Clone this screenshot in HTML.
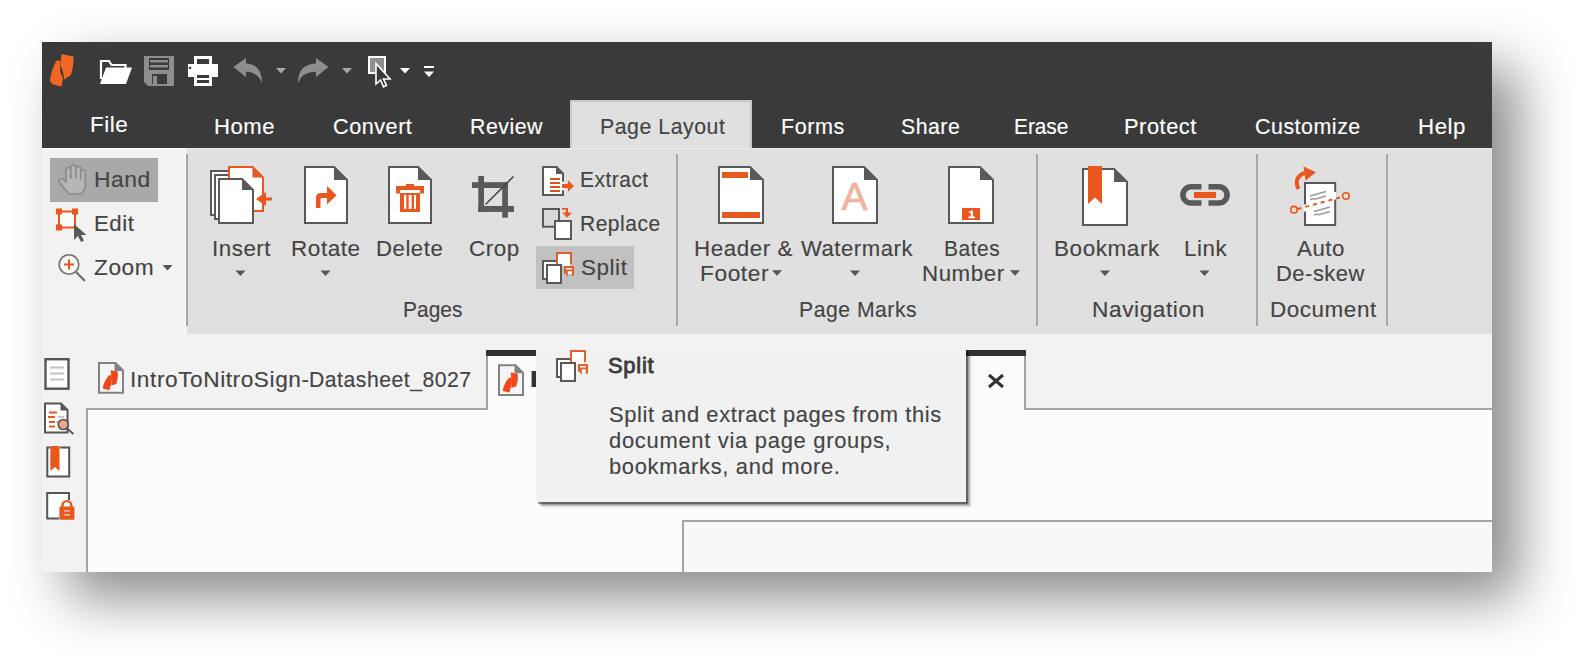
<!DOCTYPE html>
<html><head><meta charset="utf-8"><title>Split</title>
<style>
html,body{margin:0;padding:0;background:#fff;}
body{width:1576px;height:656px;position:relative;overflow:hidden;font-family:"Liberation Sans",sans-serif;}
#win{position:absolute;left:42px;top:42px;width:1450px;height:530px;background:#f2f2f2;box-shadow:26px 26px 52px rgba(0,0,0,.46);}
.abs{position:absolute;}
.t{position:absolute;white-space:pre;font-size:22.5px;line-height:26px;transform-origin:0 0;-webkit-text-stroke:.15px currentColor;}
.t.w{color:#fff;}
.t.k{color:#444;}
.t.b{-webkit-text-stroke:.85px currentColor;color:#3c3c3c}
svg{position:absolute;overflow:visible;}
.sep{top:154px;width:2px;height:172px;background:#a8a8a8;}
</style></head><body>
<div id="win"></div>
<!-- dark title + tab bar -->
<div class="abs" style="left:42px;top:42px;width:1450px;height:106px;background:#3a3a3a"></div>
<!-- ribbon body -->
<div class="abs" style="left:187px;top:148px;width:1305px;height:185.500px;background:#e0e0e0;border-top:1px solid #ebebeb;box-sizing:border-box"></div>
<!-- active tab -->
<div class="abs" style="left:570px;top:100px;width:178px;height:46px;background:#e0e0e0;border:2px solid #c9c9c9;border-bottom:none"></div>
<!-- separators -->
<div class="abs sep" style="left:186px"></div>
<div class="abs sep" style="left:676px"></div>
<div class="abs sep" style="left:1036px"></div>
<div class="abs sep" style="left:1256px"></div>
<div class="abs sep" style="left:1386px"></div>
<div class="abs" style="left:185px;top:149px;width:1px;height:184px;background:#fafafa"></div>
<div class="abs" style="left:42px;top:148px;width:144px;height:1px;background:#fdfdfd"></div>
<!-- hand bg / split bg -->
<div class="abs" style="left:50px;top:158px;width:108px;height:43.500px;background:#a9a9a9"></div>
<div class="abs" style="left:536px;top:246px;width:98px;height:43px;background:#c1c1c1"></div>
<!-- doc area -->
<div class="abs" style="left:86px;top:408px;width:1406px;height:164px;background:#fcfcfc;border-left:2px solid #a4a4a4;border-top:2px solid #a4a4a4;box-sizing:border-box"></div>
<!-- active doc tab -->
<div class="abs" style="left:486px;top:352px;width:540px;height:58px;background:#fcfcfc;border-left:2px solid #a4a4a4;border-right:2px solid #a4a4a4;box-sizing:border-box"></div>
<div class="abs" style="left:486px;top:350px;width:540px;height:5.700px;background:#333"></div>
<!-- inner page -->
<div class="abs" style="left:682px;top:520px;width:810px;height:52px;background:#f8f8fa;border-left:2px solid #a4a4a4;border-top:2px solid #a4a4a4;box-sizing:border-box"></div>
<!-- tooltip -->
<div class="abs" style="left:536px;top:348px;width:429.800px;height:153.900px;background:#f1f1f1;box-shadow:2.200px 2.200px 0 rgba(0,0,0,.44),3.800px 3.800px 1px rgba(0,0,0,.2),5px 5px 3px rgba(0,0,0,.12)"></div>
<svg width="1576" height="656" viewBox="0 0 1576 656" style="left:0;top:0">
<defs>
<g id="pg44"><path d="M1 1H30L43 14V57H1Z" fill="#fff" stroke="#595959" stroke-width="2"/><path d="M30 0V14H44Z" fill="#595959"/></g>
<g id="pg46"><path d="M1 1H32L45 14V57H1Z" fill="#fff" stroke="#595959" stroke-width="2"/><path d="M32 0V14H46Z" fill="#595959"/></g>
<path id="dd" d="M0 0H10L5 5.5Z"/>
<g id="spl">
<rect x="1" y="9" width="14" height="18" fill="#fff" stroke="#595959" stroke-width="2"/>
<path d="M15 13V1H29V12.300" fill="#fff" stroke="#e0602d" stroke-width="2"/>
<rect x="16" y="2" width="12" height="12" fill="#fff"/>
<rect x="5" y="13" width="14" height="18" fill="#fff" stroke="#595959" stroke-width="2"/>
<rect x="22" y="14" width="10" height="8" fill="#fff"/>
<path d="M22 14H32V23.700H29.800V19.300H25.800V23.700H24V21.700H22Z M24 16V17.600H29.800V16Z" fill="#e0602d" fill-rule="evenodd"/>
</g>
</defs>
<!-- logo -->
<g fill="#f26522">
<path d="M56.5 60.5 Q59 60 60.5 61.5 L60.5 66 Q59 72 63 78 L61.5 86.5 L53 84.5 Q49.5 82 50.3 78 Q52 68 56.5 60.5Z"/>
<path d="M61.6 54 L73.6 56.6 Q73.5 68 71 75 L64.3 79.6 Q63.5 72 61 66 Q60 60 61.6 54Z"/>
</g>
<!-- folder -->
<path d="M101 79V61H109L111.500 65H125.500V68" fill="none" stroke="#fff" stroke-width="2.200"/>
<path d="M106 67.500H132L126 84H100Z" fill="#fff"/>
<!-- save -->
<g fill="#8e8e8e">
<path d="M144 56H174V86H148L144 82Z M149 58V70H169V58Z M152 74V84H167V74Z" fill-rule="evenodd"/>
<rect x="150" y="60" width="18" height="2.5"/><rect x="150" y="65" width="18" height="2.5"/>
<rect x="153" y="76" width="4" height="8"/>
</g>
<!-- printer -->
<g fill="#fff">
<path d="M194 56H212V66H209V59H197V66H194Z"/>
<path d="M188 64H218V77H212V72H194V77H188Z M190 66.5a1.3 1.3 0 1 0 .01 0Z" fill-rule="evenodd"/>
<path d="M194 72H212V86H194Z M197 75V78H209V75Z M197 80V83H209V80Z" fill-rule="evenodd"/>
</g>
<!-- undo -->
<path d="M233.5 67 L246 58 V63.5 Q262 64 262 83 Q258 72 246 71.5 V77Z" fill="#8e8e8e"/>
<use href="#dd" x="276" y="68" fill="#a8a8a8"/>
<!-- redo -->
<path d="M328.500 67 L316 58 V63.500 Q298 64 298 83 Q302 72 316 71.500 V77Z" fill="#8e8e8e"/>
<use href="#dd" x="342" y="68" fill="#a8a8a8"/>
<!-- select -->
<rect x="369" y="57" width="16" height="16" fill="#8e8e8e" stroke="#fff" stroke-width="2"/>
<path d="M376 63.500 V84 L380.500 80 L383.500 87 L386.500 85.500 L383.500 79 H390Z" fill="#3a3a3a" stroke="#fff" stroke-width="1.600"/>
<use href="#dd" x="400" y="68" fill="#fff"/>
<rect x="424" y="66" width="10" height="2" fill="#fff"/>
<use href="#dd" x="424" y="71.500" fill="#fff"/>

<!-- hand -->
<g fill="#b6b6b6" stroke="#8c8c8c" stroke-width="1.600" stroke-linejoin="round" stroke-linecap="round" transform="translate(72 0) scale(1.1 1) translate(-71.500 0)">
<path d="M66 182 V170 Q66 167.500 68.200 167.500 Q70.400 167.500 70.400 170 V178 V167.500 Q70.400 165 72.700 165 Q75 165 75 167.500 V178 V168.500 Q75 166.200 77.200 166.200 Q79.400 166.200 79.400 168.500 V179 V172 Q79.400 170 81.500 170 Q83.600 170 83.600 172 V184 Q83.600 190 80 194 H69 Q65 190 60.500 183 Q58.500 180 60.500 179 Q62.500 178 66 182Z"/>
</g>
<!-- edit -->
<rect x="59" y="211.500" width="16" height="16" fill="#fff" stroke="#e8571e" stroke-width="2"/>
<g fill="#e8571e"><rect x="56" y="208.500" width="6" height="6"/><rect x="72" y="208.500" width="6" height="6"/><rect x="56" y="224.500" width="6" height="6"/></g>
<path d="M74 224 V240 L78 236 L81 242 L84 240.500 L81 235 H86.500Z" fill="#595959"/>
<!-- zoom -->
<circle cx="69" cy="264.500" r="9.800" fill="#f7f7f7" stroke="#707070" stroke-width="1.600"/>
<path d="M76 272 L85 281" stroke="#707070" stroke-width="2.300"/>
<path d="M64 264.500H74M69 259.500V269.500" stroke="#e8571e" stroke-width="2"/>
<use href="#dd" x="162.500" y="265" fill="#555"/>

<!-- insert -->
<rect x="211" y="171" width="34" height="44" fill="#fff" stroke="#595959" stroke-width="2"/>
<rect x="215" y="175" width="34" height="44" fill="#fff" stroke="#595959" stroke-width="2"/>
<path d="M229 167H252.500L263 177.500V211H229Z" fill="#fff" stroke="#e8571e" stroke-width="2"/>
<path d="M252.500 166V177.500H264Z" fill="#e8571e"/>
<path d="M219 179H242L253 190V223H219Z" fill="#fff" stroke="#595959" stroke-width="2"/>
<path d="M242 178V190H254Z" fill="#595959"/>
<path d="M256 199 L266 192 V197.500 H272 V200.500 H266 V206Z" fill="#e8571e"/>
<use href="#dd" x="235.500" y="270.500" fill="#555"/>
<!-- rotate -->
<use href="#pg44" x="304" y="166"/>
<path d="M316 208 V198 Q316 193 321 193 H327 V186 L336.500 195.300 L327 204.500 V198 H322 Q320.500 198 320.500 199.500 V208Z" fill="#e8571e"/>
<use href="#dd" x="320.500" y="270.500" fill="#555"/>
<!-- delete -->
<use href="#pg44" x="388" y="166"/>
<g fill="#e8571e">
<rect x="406" y="184" width="8" height="3"/>
<path d="M396 186H424V193.500H420V190H400V193.500H396Z"/>
<path d="M400 193H420V212H400Z M404 195V209H416V195Z" fill-rule="evenodd"/>
<rect x="406.300" y="195" width="2.400" height="14"/><rect x="411.600" y="195" width="2.400" height="14"/>
</g>
<!-- crop -->
<g fill="#595959">
<rect x="478.300" y="176" width="5.700" height="36"/>
<rect x="472" y="182.200" width="36" height="5.800"/>
<rect x="502.200" y="182.200" width="5.700" height="35.500"/>
<rect x="478.300" y="206" width="35.700" height="5.900"/>
</g>
<path d="M485.500 204.500 L513.500 176.500" stroke="#4a4a4a" stroke-width="1.600"/>
<!-- extract -->
<path d="M543 167H556.500L563 173.500V195H543Z" fill="#fff" stroke="#595959" stroke-width="2"/>
<path d="M556 166V174H564Z" fill="#595959"/>
<rect x="561.500" y="181.700" width="3" height="8.600" fill="#fff"/>
<g fill="#d9541e"><rect x="550" y="178" width="10" height="2"/><rect x="550" y="182" width="10" height="2"/><rect x="550" y="186" width="10" height="2"/><rect x="550" y="190" width="10" height="2"/></g>
<path d="M562 184H568V180.300L574 186L568 191.700V188H562Z" fill="#e8571e"/>
<!-- replace -->
<rect x="543" y="209" width="16" height="17.700" fill="#d9d9d9" stroke="#595959" stroke-width="2"/>
<rect x="555" y="221" width="16" height="18" fill="#fff" stroke="#595959" stroke-width="2"/>
<path d="M562 208H568V212.500H571.800L567 217.700L562.300 212.500H566V209.800H562Z" fill="#e8571e"/>
<!-- split -->
<use href="#spl" x="542" y="252"/>

<!-- header footer -->
<use href="#pg46" x="718" y="166"/>
<rect x="722" y="172" width="26" height="6" fill="#e8571e"/><rect x="722" y="212" width="38" height="6" fill="#e8571e"/>
<use href="#dd" x="772" y="270.300" fill="#555"/>
<!-- watermark -->
<use href="#pg46" x="832" y="166"/>
<text x="854.500" y="209.500" font-family="Liberation Sans, sans-serif" font-size="39" fill="#f2b39c" stroke="#f2b39c" stroke-width=".7" text-anchor="middle">A</text>
<use href="#dd" x="850" y="270.500" fill="#555"/>
<!-- bates -->
<use href="#pg46" x="948" y="166"/>
<rect x="962" y="208" width="18" height="12" fill="#e8571e"/>
<path d="M968.500 212.500L971 210.500H973V216.500H975V218.300H968.500V216.500H970.700V212.800H968.500Z" fill="#fff"/>
<use href="#dd" x="1010" y="270.300" fill="#555"/>
<!-- bookmark -->
<path d="M1083 169H1114L1127 182V225H1083Z" fill="#fff" stroke="#595959" stroke-width="2"/>
<path d="M1114 168V182H1128Z" fill="#595959"/>
<path d="M1088 166H1102V204L1095 197.500L1088 204Z" fill="#e8571e"/>
<use href="#dd" x="1100" y="270.500" fill="#555"/>
<!-- link -->
<g fill="none" stroke="#595959" stroke-width="5.600">
<path d="M1201.500 186.800H1191A8.100 8.100 0 0 0 1191 203H1201.500"/>
<path d="M1208.500 186.800H1219A8.100 8.100 0 0 1 1219 203H1208.500"/>
</g>
<rect x="1194" y="192" width="22" height="6" fill="#e8571e"/>
<use href="#dd" x="1199.500" y="270.500" fill="#555"/>
<!-- deskew -->
<rect x="1305" y="183" width="30.200" height="42" fill="#fff" stroke="#595959" stroke-width="2"/>
<rect x="1303.900" y="204.500" width="3" height="7" fill="#fff"/><rect x="1333.500" y="192" width="2.800" height="7.500" fill="#fff"/>
<g stroke="#9a9a9a" stroke-width="1.500">
<path d="M1310 196L1326 191.500M1314 199.500L1326 196M1310 199.500L1314 198.500"/>
<path d="M1314 211.500L1330 207M1318 215L1330 211.500M1314 215L1318 214"/>
</g>
<path d="M1297.500 209 L1342.500 196.800" stroke="#e8571e" stroke-width="2" stroke-dasharray="4 4"/>
<circle cx="1294" cy="209.700" r="3.300" fill="#f6ddd3" stroke="#e8571e" stroke-width="1.600"/>
<circle cx="1346" cy="196" r="3.300" fill="#f6ddd3" stroke="#e8571e" stroke-width="1.600"/>
<path d="M1298.500 189 Q1293 177 1305 172.800" fill="none" stroke="#e8571e" stroke-width="4"/>
<path d="M1303.500 166.500 L1316 172.300 L1305.500 180.500Z" fill="#e8571e"/>

<!-- sidebar icons -->
<rect x="45.500" y="359.200" width="23" height="29.500" fill="#fff" stroke="#555" stroke-width="2.400"/>
<g stroke="#c4c4c4" stroke-width="2"><path d="M50 367.500H64M50 373.500H64M50 379.500H64"/></g>
<!-- search page -->
<path d="M45 403.500H61L67.500 410V432.500H45Z" fill="#fff" stroke="#555" stroke-width="2"/>
<path d="M60.500 402.500V410.500H68.500Z" fill="#595959"/>
<g fill="#e8571e"><rect x="49" y="411.500" width="8" height="2"/><rect x="48" y="416" width="7" height="2"/><rect x="49" y="421" width="6" height="2"/><rect x="49" y="425.500" width="6" height="2"/></g>
<g fill="#c9c9c9"><rect x="58" y="416" width="6" height="2"/><rect x="56" y="421" width="3" height="2"/></g>
<circle cx="63.300" cy="424.500" r="5" fill="#f0a48a" stroke="#555" stroke-width="1.700"/>
<path d="M67 428.500L73.500 434" stroke="#555" stroke-width="1.800"/>
<!-- bookmark small -->
<path d="M50 447.500H47.300V476.500H69.200V447.500H60" fill="#fff" stroke="#555" stroke-width="2"/>
<path d="M50.300 446H59.500V471L55 467L50.300 471Z" fill="#e8571e"/>
<!-- lock page -->
<path d="M69 500V493H47.200V518.600H59" fill="#fff" stroke="#555" stroke-width="2"/>
<rect x="59.400" y="506.500" width="15" height="13.200" rx="1" fill="#e8571e"/>
<path d="M62.500 507V505.500A4.400 4.400 0 0 1 71.300 505.500V507" fill="none" stroke="#e8571e" stroke-width="2.400"/>
<rect x="64" y="510" width="6" height="1.600" fill="#f5b9a2"/><rect x="64" y="514" width="6" height="1.600" fill="#f5b9a2"/>

<!-- doc tab icons -->
<g id="pdfi">
<path d="M99 363H115.500L123 370.500V392.800H99Z" fill="#f6f6f6" stroke="#828282" stroke-width="2"/>
<path d="M114.500 362V371H124Z" fill="#828282"/>
<path d="M108.700 375.600L112.300 375Q112 383 109.400 390.200L102.600 388.600Q104 381 108.700 375.600Z" fill="#f0481c"/>
<path d="M110.600 370.300L117.800 371.400Q118.500 378 116.300 384L111.300 385.600Q112.500 378 110.600 370.300Z" fill="#f0481c"/>
</g>
<use href="#pdfi" x="400" y="2.300"/>
<rect x="531.600" y="371" width="4.400" height="16" fill="#333"/>
<!-- close x -->
<path d="M989 375L1003 387M1003 375L989 387" stroke="#333" stroke-width="3"/>
<!-- tooltip icon -->
<use href="#spl" x="556" y="350"/>
</svg>

<span class="t w" style="left:89.7px;top:112.1px;letter-spacing:0.55px;transform:scaleX(0.999)">File</span>
<span class="t w" style="left:213.8px;top:113.9px;letter-spacing:0.55px;transform:scaleX(0.982)">Home</span>
<span class="t w" style="left:333.1px;top:113.9px;letter-spacing:0.55px;transform:scaleX(0.961)">Convert</span>
<span class="t w" style="left:470.0px;top:113.9px;letter-spacing:0.55px;transform:scaleX(0.947)">Review</span>
<span class="t k" style="left:600.0px;top:113.9px;letter-spacing:0.55px;transform:scaleX(0.947)">Page Layout</span>
<span class="t w" style="left:781.4px;top:113.9px;letter-spacing:0.55px;transform:scaleX(0.959)">Forms</span>
<span class="t w" style="left:900.5px;top:113.9px;letter-spacing:0.55px;transform:scaleX(0.944)">Share</span>
<span class="t w" style="left:1013.8px;top:113.9px;letter-spacing:-0.08px;transform:scaleX(0.930)">Erase</span>
<span class="t w" style="left:1124.2px;top:113.9px;letter-spacing:0.55px;transform:scaleX(0.970)">Protect</span>
<span class="t w" style="left:1255.2px;top:113.9px;letter-spacing:0.55px;transform:scaleX(0.951)">Customize</span>
<span class="t w" style="left:1417.9px;top:113.9px;letter-spacing:0.55px;transform:scaleX(0.990)">Help</span>
<span class="t k" style="left:94.0px;top:167.1px;letter-spacing:0.55px;transform:scaleX(1.016)">Hand</span>
<span class="t k" style="left:94.0px;top:211.1px;letter-spacing:0.55px;transform:scaleX(0.988)">Edit</span>
<span class="t k" style="left:93.9px;top:255.4px;letter-spacing:0.55px;transform:scaleX(1.008)">Zoom</span>
<span class="t k" style="left:211.8px;top:235.7px;letter-spacing:0.55px;transform:scaleX(0.992)">Insert</span>
<span class="t k" style="left:291.4px;top:235.7px;letter-spacing:0.55px;transform:scaleX(1.001)">Rotate</span>
<span class="t k" style="left:376.3px;top:235.7px;letter-spacing:0.55px;transform:scaleX(0.984)">Delete</span>
<span class="t k" style="left:468.7px;top:235.7px;letter-spacing:0.55px;transform:scaleX(0.997)">Crop</span>
<span class="t k" style="left:579.9px;top:167.1px;letter-spacing:0.55px;transform:scaleX(0.930)">Extract</span>
<span class="t k" style="left:579.9px;top:211.3px;letter-spacing:0.55px;transform:scaleX(0.933)">Replace</span>
<span class="t k" style="left:580.8px;top:255.4px;letter-spacing:0.55px;transform:scaleX(0.998)">Split</span>
<span class="t k" style="left:402.5px;top:296.9px;letter-spacing:0.02px;transform:scaleX(0.930)">Pages</span>
<span class="t k" style="left:694.1px;top:235.7px;letter-spacing:0.55px;transform:scaleX(0.995)">Header &amp;</span>
<span class="t k" style="left:699.9px;top:261.1px;letter-spacing:0.55px;transform:scaleX(1.010)">Footer</span>
<span class="t k" style="left:801.2px;top:235.7px;letter-spacing:0.55px;transform:scaleX(0.981)">Watermark</span>
<span class="t k" style="left:944.2px;top:235.7px;letter-spacing:0.55px;transform:scaleX(0.934)">Bates</span>
<span class="t k" style="left:922.2px;top:261.1px;letter-spacing:0.55px;transform:scaleX(0.992)">Number</span>
<span class="t k" style="left:798.5px;top:296.9px;letter-spacing:0.55px;transform:scaleX(0.941)">Page Marks</span>
<span class="t k" style="left:1053.5px;top:235.7px;letter-spacing:0.55px;transform:scaleX(1.001)">Bookmark</span>
<span class="t k" style="left:1183.9px;top:235.7px;letter-spacing:0.55px;transform:scaleX(0.991)">Link</span>
<span class="t k" style="left:1092.0px;top:296.9px;letter-spacing:0.55px;transform:scaleX(1.009)">Navigation</span>
<span class="t k" style="left:1297.2px;top:235.7px;letter-spacing:0.55px;transform:scaleX(0.991)">Auto</span>
<span class="t k" style="left:1276.1px;top:261.1px;letter-spacing:0.55px;transform:scaleX(0.973)">De-skew</span>
<span class="t k" style="left:1269.5px;top:296.9px;letter-spacing:0.55px;transform:scaleX(0.998)">Document</span>
<span class="t k" style="left:129.9px;top:367.1px;letter-spacing:0.55px;transform:scaleX(1.008)">IntroToNitroSign-</span>
<span class="t k" style="left:309.0px;top:367.1px;letter-spacing:0.55px;transform:scaleX(0.941)">Datasheet_8027</span>
<span class="t k b" style="font-size:21.5px;left:608.4px;top:352.5px;letter-spacing:0.73px;transform:scaleX(1.020)">Split</span>
<span class="t k" style="font-size:21.5px;left:608.5px;top:402.3px;letter-spacing:0.58px;transform:scaleX(1.020)">Split and extract pages from this</span>
<span class="t k" style="font-size:21.5px;left:608.5px;top:428.2px;letter-spacing:0.70px;transform:scaleX(1.020)">document via page groups,</span>
<span class="t k" style="font-size:21.5px;left:608.5px;top:454.0px;letter-spacing:0.66px;transform:scaleX(1.020)">bookmarks, and more.</span>
</body></html>
